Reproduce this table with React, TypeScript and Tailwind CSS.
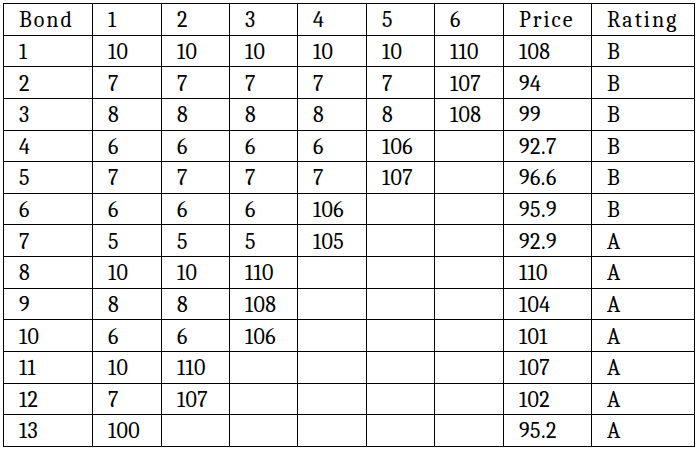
import React from "react";

const header = ["Bond", "1", "2", "3", "4", "5", "6", "Price", "Rating"];
const rows: string[][] = [
  ["1", "10", "10", "10", "10", "10", "110", "108", "B"],
  ["2", "7", "7", "7", "7", "7", "107", "94", "B"],
  ["3", "8", "8", "8", "8", "8", "108", "99", "B"],
  ["4", "6", "6", "6", "6", "106", "", "92.7", "B"],
  ["5", "7", "7", "7", "7", "107", "", "96.6", "B"],
  ["6", "6", "6", "6", "106", "", "", "95.9", "B"],
  ["7", "5", "5", "5", "105", "", "", "92.9", "A"],
  ["8", "10", "10", "110", "", "", "", "110", "A"],
  ["9", "8", "8", "108", "", "", "", "104", "A"],
  ["10", "6", "6", "106", "", "", "", "101", "A"],
  ["11", "10", "110", "", "", "", "", "107", "A"],
  ["12", "7", "107", "", "", "", "", "102", "A"],
  ["13", "100", "", "", "", "", "", "95.2", "A"],
];

export default function App() {
  const all = [header, ...rows];
  return (
    <div className="w-[697px] h-[450px] bg-white pl-[3px] pt-[3px] font-serif text-black">
      <div className="grid w-[692px] grid-cols-[89px_69px_68px_68px_69px_68px_69px_88px_103px] auto-rows-[31.64px] border-l border-t border-black text-[22px] leading-none">
        {all.map((r, ri) =>
          r.map((c, ci) => (
            <div
              key={`${ri}-${ci}`}
              className={
                ri === 0 && (ci === 0 || ci >= 7)
                  ? "flex items-center border-r border-b border-black pl-[15px] pt-[2px] tracking-[2px]"
                  : "flex items-center border-r border-b border-black pl-[15px] pt-[2px] tracking-[0.5px]"
              }
            >
              {c}
            </div>
          ))
        )}
      </div>
    </div>
  );
}
